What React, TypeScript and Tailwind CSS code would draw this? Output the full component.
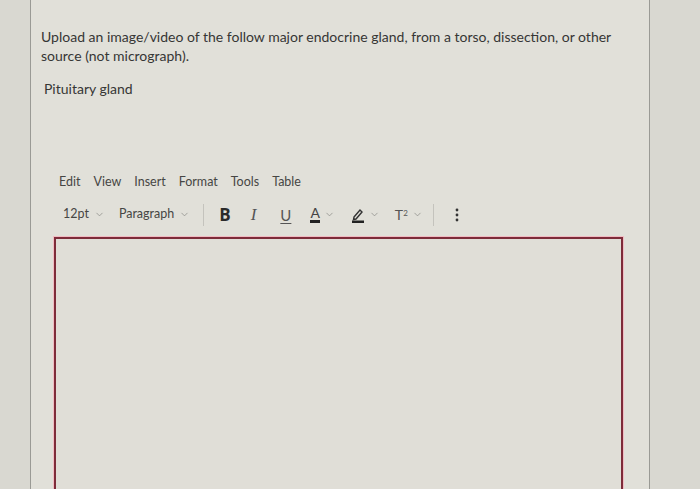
import React from 'react';
import { ChevronDown } from 'lucide-react';

const menus = ['Edit', 'View', 'Insert', 'Format', 'Tools', 'Table'];

const Caret: React.FC = () => (
  <ChevronDown className="w-[11px] h-[11px] text-[#8a8a86]" strokeWidth={1.6} />
);

const App: React.FC = () => {
  return (
    <div
      className="h-[489px] w-[700px] overflow-hidden bg-[#d9d8d1] flex"
      style={{ fontFamily: 'Lato, "Open Sans", sans-serif' }}
    >
      <div className="ml-[30px] w-[620px] h-full bg-[#e1e0d9] border-x border-[#9a9a95] flex flex-col">
        <div className="pl-[10px] pr-[10px] pt-[27px] text-[14px] leading-[19px] text-[#363635]">
          <p>
            Upload an image/video of the follow major endocrine gland, from a torso, dissection, or other
            source (not micrograph).
          </p>
          <p className="mt-[14px] pl-[3px]">Pituitary gland</p>
        </div>

        <div className="mt-[75px] pl-[28px] flex gap-[13px] text-[12.5px] text-[#464644]">
          {menus.map((m) => (
            <span key={m}>{m}</span>
          ))}
        </div>

        <div className="mt-[13px] pl-[32px] h-[20px] flex items-center text-[12.5px] text-[#464644]">
          <div className="flex items-center gap-[5px]">
            <span>12pt</span>
            <Caret />
          </div>
          <div className="ml-[14px] flex items-center gap-[5px]">
            <span>Paragraph</span>
            <Caret />
          </div>
          <div className="ml-[13px] w-px h-[22px] bg-[#c4c3bd]" />
          <span className="ml-[15px] text-[17px] font-bold text-[#2a2a2a]" style={{ fontFamily: '"Open Sans", sans-serif' }}>
            B
          </span>
          <span className="ml-[20px] text-[17px] italic text-[#555]" style={{ fontFamily: '"Liberation Serif", serif' }}>
            I
          </span>
          <span className="ml-[24px] text-[15px] underline underline-offset-2 text-[#555]">U</span>
          <div className="ml-[19px] flex items-center gap-[4px]">
            <span className="text-[14px] text-[#444] border-b-[3px] border-[#222] leading-[14px]">A</span>
            <Caret />
          </div>
          <div className="ml-[16px] flex items-center gap-[4px]">
            <svg width="14" height="16" viewBox="0 0 14 16">
              <path d="M3 10 L9 3 L11 5 L5 12 L2.5 12.5 Z" fill="none" stroke="#333" strokeWidth="1.4" />
              <rect x="1" y="13.5" width="12" height="2.5" fill="#222" />
            </svg>
            <Caret />
          </div>
          <div className="ml-[15px] flex items-center gap-[4px] text-[#555]">
            <span className="text-[14px]">
              T<sup className="text-[8px]">2</sup>
            </span>
            <Caret />
          </div>
          <div className="ml-[10px] w-px h-[22px] bg-[#c4c3bd]" />
          <svg className="ml-[21px]" width="4" height="14" viewBox="0 0 4 14">
            <circle cx="2" cy="2" r="1.4" fill="#333" />
            <circle cx="2" cy="7" r="1.4" fill="#333" />
            <circle cx="2" cy="12" r="1.4" fill="#333" />
          </svg>
        </div>

        <div className="mt-[12px] ml-[23px] w-[569px] flex-1 border-2 border-b-0 border-[#7e2c3a] bg-[#e0ded7] shadow-[0_0_0_1px_#f1bcc3]" />
      </div>
    </div>
  );
};

export default App;
